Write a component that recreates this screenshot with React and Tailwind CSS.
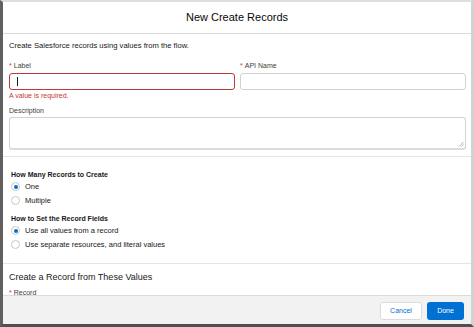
import React from "react";

function Radio({ checked, label }) {
  return (
    <div className="flex items-center h-[13px] gap-[5px]">
      <span className="w-[9px] h-[9px] rounded-full border border-[#c9c7c5] bg-white flex items-center justify-center shrink-0">
        {checked && <span className="w-[4px] h-[4px] rounded-full bg-[#0070d2]" />}
      </span>
      <span className="text-[7.5px] leading-[13px] text-[#181818]">{label}</span>
    </div>
  );
}

function Label({ text, required }) {
  return (
    <div className="h-[10px] leading-[10px] text-[7px] text-[#3e3e3c]">
      {required && <span className="text-[#c23934] mr-[2px]">*</span>}
      {text}
    </div>
  );
}

export default function App() {
  return (
    <div
      className="w-[474px] h-[327px] flex flex-col bg-white border-l-[3px] border-l-[#606060] border-t-2 border-t-[#dedede] border-r-[3px] border-r-[#d2d2d2] border-b-[3px] border-b-[#505050] overflow-hidden"
      style={{ fontFamily: '"Liberation Sans", Arial, sans-serif' }}
    >
      {/* Header */}
      <div className="h-[32px] shrink-0 border-b border-[#dddbda] flex items-center justify-center">
        <span className="text-[11px] text-[#080707]">New Create Records</span>
      </div>

      {/* Body */}
      <div className="flex-1 overflow-hidden flex flex-col">
        {/* Section 1 */}
        <div className="pt-[7px] pb-[6px] pl-[6px] pr-[5px] border-b border-[#e5e5e5] shrink-0">
          <div className="h-[10px] leading-[10px] text-[7.6px] text-[#181818]">
            Create Salesforce records using values from the flow.
          </div>
          <div className="grid grid-cols-2 gap-x-[5px] mt-[10px]">
            <div>
              <Label text="Label" required />
              <div className="mt-[2px] h-[17px] rounded-[3px] border border-[#c23934] flex items-center pl-[7px]">
                <span className="w-px h-[9px] bg-[#181818]" />
              </div>
              <div className="mt-[1px] h-[10px] leading-[10px] text-[7px] text-[#c23934]">
                A value is required.
              </div>
            </div>
            <div>
              <Label text="API Name" required />
              <div className="mt-[2px] h-[17px] rounded-[3px] border border-[#d4d2d0]" />
            </div>
          </div>
          <div className="mt-[5px]">
            <Label text="Description" />
            <div className="mt-[1px] h-[33px] rounded-[3px] border border-[#d4d2d0] border-b-2 border-b-[#dcdcdc] relative">
              <svg className="absolute right-[1px] bottom-[1px]" width="6" height="6" viewBox="0 0 6 6">
                <path d="M5.5 1 L1 5.5 M5.5 3.5 L3.5 5.5" stroke="#9a9a9a" strokeWidth="0.8" />
              </svg>
            </div>
          </div>
        </div>

        {/* Section 2 */}
        <div className="pt-[13px] pb-[12px] pl-[8px] pr-[5px] border-b border-[#e5e5e5] shrink-0">
          <div className="h-[10px] leading-[10px] text-[7px] font-bold text-[#181818]">
            How Many Records to Create
          </div>
          <Radio checked label="One" />
          <div className="mt-[1px]">
            <Radio label="Multiple" />
          </div>
          <div className="mt-[7px] h-[10px] leading-[10px] text-[7px] font-bold text-[#181818]">
            How to Set the Record Fields
          </div>
          <Radio checked label="Use all values from a record" />
          <div className="mt-[1px]">
            <Radio label="Use separate resources, and literal values" />
          </div>
        </div>

        {/* Section 3 */}
        <div className="pt-[7px] pl-[6px] pr-[5px] shrink-0">
          <div className="h-[12px] leading-[12px] text-[9px] text-[#181818]">
            Create a Record from These Values
          </div>
          <div className="mt-[5px]">
            <Label text="Record" required />
          </div>
        </div>
      </div>

      {/* Footer */}
      <div className="h-[29px] shrink-0 border-t border-[#dddbda] bg-[#f3f2f2] flex items-start justify-end gap-[5px] pt-[6px] pr-[7px]">
        <button className="h-[18px] w-[42px] rounded-[3px] border border-[#dddbda] bg-white text-[7px] text-[#0070d2]">
          Cancel
        </button>
        <button className="h-[18px] w-[37px] rounded-[3px] bg-[#0070d2] text-[7px] text-white">
          Done
        </button>
      </div>
    </div>
  );
}
